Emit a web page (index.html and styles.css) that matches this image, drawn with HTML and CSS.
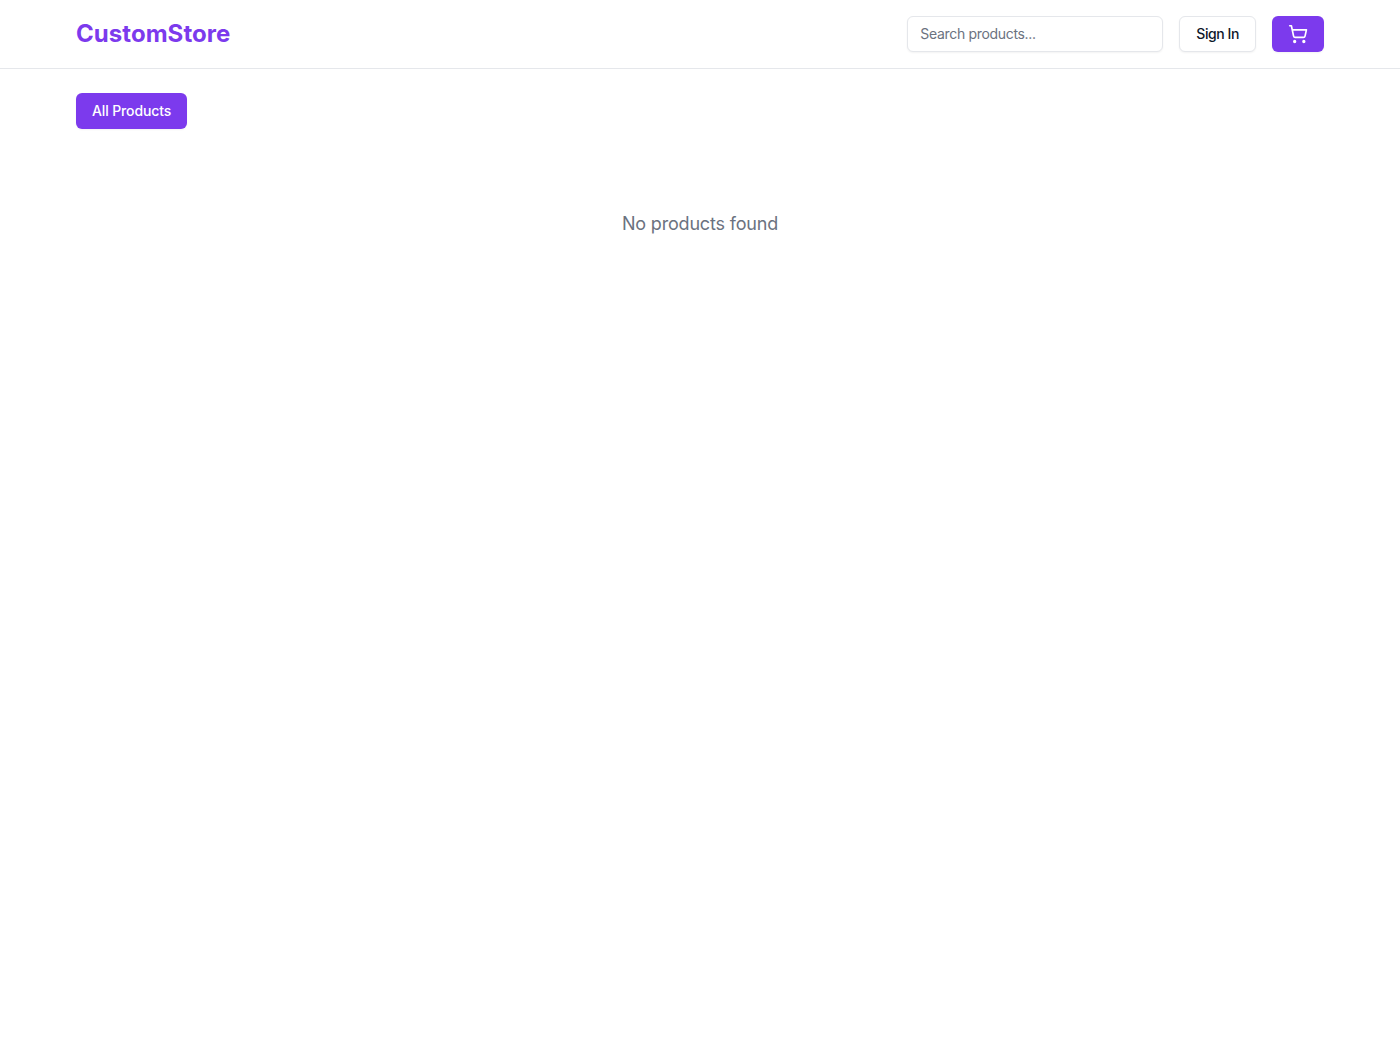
FILE: index.html
```html
<!DOCTYPE html>
<html lang="en">
<head>
<meta charset="utf-8">
<title>CustomStore</title>
<link rel="stylesheet" href="styles.css">
</head>
<body>
<header class="site-header">
  <div class="container header-row">
    <a class="logo" href="#">CustomStore</a>
    <div class="header-actions">
      <input class="search" type="text" placeholder="Search products...">
      <button class="btn btn-outline" type="button">Sign In</button>
      <button class="btn btn-primary btn-cart" type="button" aria-label="Cart">
        <svg class="cart-icon" xmlns="http://www.w3.org/2000/svg" width="20" height="20" viewBox="0 0 24 24" fill="none" stroke="currentColor" stroke-width="2" stroke-linecap="round" stroke-linejoin="round"><circle cx="8" cy="21" r="1"/><circle cx="19" cy="21" r="1"/><path d="M2.05 2.05h2l2.66 12.42a2 2 0 0 0 2 1.58h9.78a2 2 0 0 0 1.95-1.57l1.65-7.43H5.12"/></svg>
      </button>
    </div>
  </div>
</header>
<main class="container main">
  <nav class="categories">
    <button class="btn btn-primary" type="button">All Products</button>
  </nav>
  <p class="empty">No products found</p>
</main>
</body>
</html>
```
FILE: styles.css
```css
* { box-sizing: border-box; }
html, body { margin: 0; padding: 0; }
body {
  background: #fff;
  color: #0f172a;
  font-family: "Inter", "Liberation Sans", sans-serif;
  font-size: 14px;
  line-height: 20px;
}
.container {
  max-width: 1280px;
  margin: 0 auto;
  padding: 0 16px;
}
.site-header { border-bottom: 1px solid #e5e7eb; background: #fff; }
.header-row {
  height: 68px;
  display: flex;
  align-items: center;
  justify-content: space-between;
}
.logo {
  color: #7c3aed;
  font-size: 24px;
  line-height: 32px;
  font-weight: 700;
  letter-spacing: 0.05px;
  text-decoration: none;
}
.header-actions { display: flex; align-items: center; gap: 16px; }
.search {
  width: 256px;
  height: 36px;
  padding: 3px 12px 5px;
  border: 1px solid #e5e7eb;
  border-radius: 6px;
  background: #fff;
  box-shadow: 0 1px 2px rgba(0, 0, 0, 0.05);
  font: inherit;
  letter-spacing: -0.32px;
  color: #0f172a;
  outline: none;
}
.search::placeholder { color: #6b7280; opacity: 1; }
.btn {
  height: 36px;
  display: inline-flex;
  align-items: center;
  justify-content: center;
  padding: 0 16px;
  border-radius: 6px;
  border: 0;
  font: inherit;
  font-weight: 500;
  white-space: nowrap;
}
.btn-primary {
  background: #7c3aed;
  color: #fff;
  letter-spacing: -0.12px;
  box-shadow: 0 1px 2px rgba(0, 0, 0, 0.05);
}
.btn-outline {
  background: #fff;
  border: 1px solid #e5e7eb;
  color: #0f172a;
  letter-spacing: -0.42px;
  box-shadow: 0 1px 2px rgba(0, 0, 0, 0.05);
}
.btn-cart { width: 52px; padding: 0; }
.cart-icon { display: block; }
.main { padding-top: 24px; }
.categories { display: flex; gap: 8px; }
.empty {
  margin: 0;
  padding-top: 81px;
  text-align: center;
  color: #6b7280;
  font-size: 18px;
  line-height: 28px;
  letter-spacing: -0.18px;
}
```
